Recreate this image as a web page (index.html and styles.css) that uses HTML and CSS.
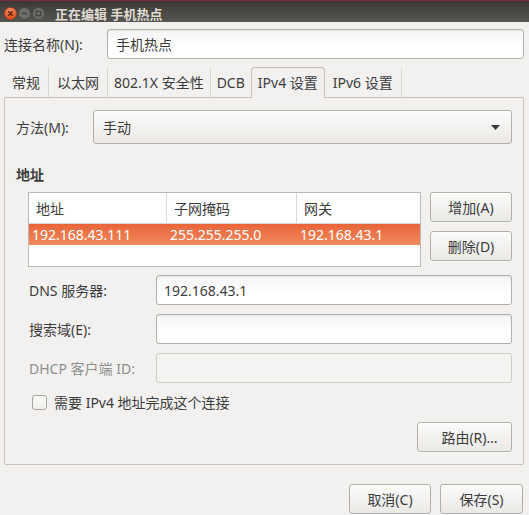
FILE: index.html
```html
<!DOCTYPE html>
<html lang="zh-CN">
<head>
<meta charset="utf-8">
<title>正在编辑 手机热点</title>
<link rel="stylesheet" href="styles.css">
</head>
<body>
<div class="window">
  <div class="titlebar">
    <div class="wbtns">
      <svg class="wbtn" width="13" height="13" viewBox="0 0 13 13">
        <defs><linearGradient id="cg" x1="0" y1="0" x2="0" y2="1"><stop offset="0" stop-color="#f58a5c"/><stop offset="1" stop-color="#de4b1a"/></linearGradient></defs>
        <circle cx="6.5" cy="6.5" r="6" fill="url(#cg)" stroke="#a8391a" stroke-width="0.8"/>
        <path d="M4.6 4.6 L8.4 8.4 M8.4 4.6 L4.6 8.4" stroke="#4a1a0c" stroke-width="1.3" stroke-linecap="round"/>
      </svg>
      <svg class="wbtn" width="13" height="13" viewBox="0 0 13 13">
        <circle cx="6.5" cy="6.5" r="6" fill="#6e6c67" stroke="#4a4945" stroke-width="0.8"/>
        <path d="M4.3 6.5 H8.7" stroke="#3e3d3a" stroke-width="1.3"/>
      </svg>
      <svg class="wbtn" width="13" height="13" viewBox="0 0 13 13">
        <circle cx="6.5" cy="6.5" r="6" fill="#6e6c67" stroke="#4a4945" stroke-width="0.8"/>
        <rect x="4.3" y="4.3" width="4.4" height="4.4" fill="none" stroke="#3e3d3a" stroke-width="1.1"/>
      </svg>
    </div>
    <div class="wtitle">正在编辑 手机热点</div>
  </div>

  <div class="name-row">
    <label class="name-label">连接名称(N):</label>
    <div class="entry name-entry">手机热点</div>
  </div>

  <div class="tabs">
    <div class="tab sep">常规</div>
    <div class="tab sep">以太网</div>
    <div class="tab sep narrow">802.1X 安全性</div>
    <div class="tab narrow">DCB</div>
    <div class="tab active">IPv4 设置</div>
    <div class="tab sep">IPv6 设置</div>
  </div>

  <div class="panel">
    <div class="method-row">
      <label class="method-label">方法(M):</label>
      <div class="combo">
        <span>手动</span>
        <svg class="arrow" width="9" height="5" viewBox="0 0 9 5"><path d="M0 0 H9 L4.5 5 Z" fill="#3c3c3c"/></svg>
      </div>
    </div>

    <div class="section-title">地址</div>

    <div class="addr-row">
      <div class="table">
        <div class="trow thead">
          <div class="cell c1">地址</div>
          <div class="cell c2">子网掩码</div>
          <div class="cell c3">网关</div>
        </div>
        <div class="trow selected">
          <div class="cell c1">192.168.43.111</div>
          <div class="cell c2">255.255.255.0</div>
          <div class="cell c3">192.168.43.1</div>
        </div>
      </div>
      <div class="side-btns">
        <div class="btn side-btn">增加(A)</div>
        <div class="btn side-btn">删除(D)</div>
      </div>
    </div>

    <div class="form">
      <div class="frow">
        <label class="flabel">DNS 服务器:</label>
        <div class="entry fentry">192.168.43.1</div>
      </div>
      <div class="frow">
        <label class="flabel">搜索域(E):</label>
        <div class="entry fentry"></div>
      </div>
      <div class="frow">
        <label class="flabel disabled">DHCP 客户端 ID:</label>
        <div class="entry fentry disabled-entry"></div>
      </div>
    </div>

    <div class="check-row">
      <span class="checkbox"></span>
      <span class="check-label">需要 IPv4 地址完成这个连接</span>
    </div>

    <div class="route-row">
      <div class="btn route-btn">路由(R)…</div>
    </div>
  </div>

  <div class="dialog-btns">
    <div class="btn dbtn cancel">取消(C)</div>
    <div class="btn dbtn save">保存(S)</div>
  </div>
</div>
</body>
</html>
```

FILE: styles.css
```css
* { box-sizing: border-box; }

html, body {
  margin: 0;
  padding: 0;
  background: #f2f1f0;
}

body {
  font-family: "Noto Sans", "Noto Sans CJK SC", sans-serif;
  font-size: 14px;
  color: #3c3c3c;
  width: 529px;
  height: 515px;
  overflow: hidden;
}

.window {
  display: flex;
  flex-direction: column;
}

/* Title bar */
.titlebar {
  height: 22px;
  border-top: 1px solid #7c2b3e;
  background: linear-gradient(#3a3935, #575550);
  display: flex;
  align-items: center;
}

.wbtns {
  display: flex;
  gap: 1px;
  padding-left: 4px;
  padding-top: 4px;
}

.wbtn { display: block; }

.wtitle {
  margin-left: 10px;
  padding-top: 3px;
  font-size: 13px;
  font-weight: bold;
  color: #dfdbd2;
}

/* Entries & buttons */
.entry {
  height: 30px;
  border: 1px solid #b3b0aa;
  border-radius: 3px;
  background: linear-gradient(#f4f4f4, #ffffff 60%);
  box-shadow: inset 0 1px 1px rgba(0,0,0,0.06);
  display: flex;
  align-items: center;
  padding-left: 7px;
  color: #3c3c3c;
}

.btn {
  border: 1px solid #b3b0aa;
  border-radius: 3px;
  background: linear-gradient(#fbfbfa, #ebe9e6);
  box-shadow: 0 1px 0 rgba(255,255,255,0.6), inset 0 1px 0 #ffffff;
  display: flex;
  align-items: center;
  justify-content: center;
  color: #3c3c3c;
}

/* Connection name row */
.name-row {
  display: flex;
  align-items: center;
  padding: 7px 5px 0 4px;
}

.name-label { width: 103px; }

.name-entry {
  flex: 1;
  padding-left: 8px;
}

/* Tabs */
.tabs {
  display: flex;
  align-items: flex-end;
  margin: 8px 0 0 4px;
  height: 30px;
  position: relative;
  z-index: 1;
}

.tab {
  height: 29px;
  padding: 0 8px 1px 8px;
  display: flex;
  align-items: center;
}

.tab.narrow { padding: 0 6px 1px 6px; }

.tab.sep { border-right: 1px solid #d8d6d2; }

.tab.active {
  height: 31px;
  margin-bottom: -1px;
  border: 1px solid #c3c0bb;
  border-bottom: none;
  border-radius: 4px 4px 0 0;
  background: #f2f1f0;
  padding: 0 6px 2px 6px;
}

/* Panel */
.panel {
  margin: 0 5px 0 4px;
  border: 1px solid #c6c3be;
  border-radius: 0 0 2px 2px;
  padding: 12px 11px 12px 11px;
  display: flex;
  flex-direction: column;
}

.method-row {
  display: flex;
  align-items: center;
}

.method-label { width: 77px; }

.combo {
  flex: 1;
  height: 34px;
  border: 1px solid #b3b0aa;
  border-radius: 3px;
  background: linear-gradient(#fcfcfc, #ebe9e6);
  box-shadow: inset 0 1px 0 #ffffff;
  display: flex;
  align-items: center;
  justify-content: space-between;
  padding: 0 11px 0 9px;
}

.arrow { display: block; }

.section-title {
  margin-top: 21px;
  height: 20px;
  line-height: 20px;
  font-weight: bold;
}

/* Address table */
.addr-row {
  display: flex;
  margin: 7px 0 0 12px;
}

.table {
  width: 393px;
  height: 75px;
  border: 1px solid #bcb9b4;
  background: #ffffff;
}

.trow {
  display: flex;
}

.thead {
  height: 31px;
  border-bottom: 1px solid #dad8d4;
}

.thead .cell {
  padding-left: 7px;
  display: flex;
  align-items: center;
}

.thead .c1, .thead .c2 { border-right: 1px solid #dad8d4; }

.cell.c1 { width: 138px; }
.cell.c2 { width: 130px; }
.cell.c3 { flex: 1; }

.selected {
  height: 21px;
  background: linear-gradient(#e8643a, #f28a5e);
  color: #ffffff;
}

.selected .cell {
  padding-left: 3px;
  display: flex;
  align-items: center;
}

.side-btns {
  display: flex;
  flex-direction: column;
  gap: 9px;
  margin-left: 9px;
}

.side-btn {
  width: 82px;
  height: 30px;
}

/* Form rows */
.form {
  display: flex;
  flex-direction: column;
  gap: 9px;
  margin-top: 8px;
}

.frow {
  display: flex;
  align-items: center;
  padding-left: 13px;
}

.flabel { width: 127px; }

.flabel.disabled { color: #8e8f8d; }

.fentry { flex: 1; }

.disabled-entry {
  background: #f3f3f2;
  border-color: #cfcdc9;
  box-shadow: none;
}

/* Checkbox */
.check-row {
  display: flex;
  align-items: center;
  height: 20px;
  margin-top: 9px;
  padding-left: 16px;
}

.checkbox {
  width: 15px;
  height: 15px;
  border: 1px solid #a9a6a0;
  border-radius: 3px;
  background: linear-gradient(#fbfbfb, #efeeec);
  margin-right: 7px;
}

/* Routes */
.route-row {
  display: flex;
  justify-content: flex-end;
  margin-top: 10px;
}

.route-btn {
  width: 95px;
  height: 30px;
  padding-left: 10px;
}

/* Dialog buttons */
.dialog-btns {
  display: flex;
  justify-content: flex-end;
  gap: 9px;
  margin: 19px 6px 0 0;
}

.dbtn { height: 30px; }
.cancel { width: 82px; }
.save { width: 83px; }
```
